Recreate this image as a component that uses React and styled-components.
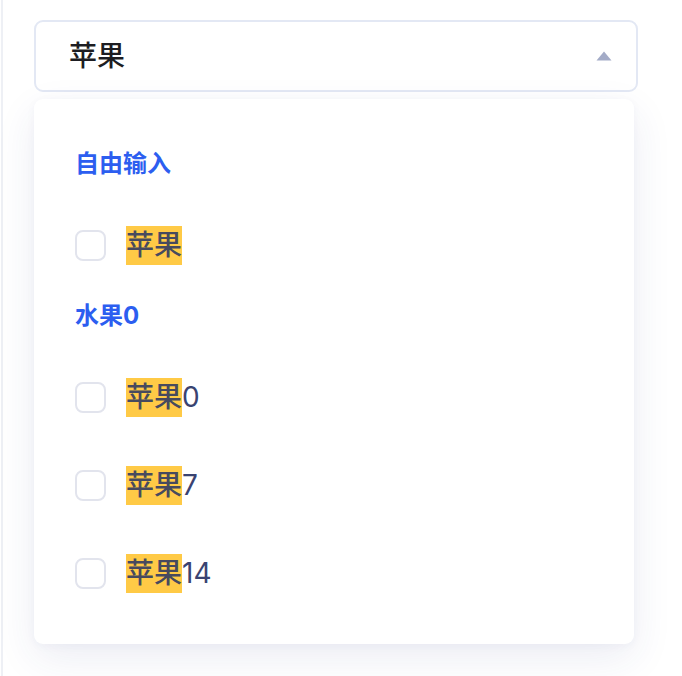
import React from "react";
import styled, { createGlobalStyle } from "styled-components";

const Global = createGlobalStyle`
  html, body { margin: 0; padding: 0; background: #fff; }
  body { font-family: Inter, "Noto Sans CJK SC", sans-serif; }
  * { box-sizing: border-box; }
`;

const Page = styled.div`
  margin-left: 1px;
  border-left: 2px solid #eef0f5;
  min-height: 676px;
  padding: 20px 0 0 31px;
`;

const Select = styled.div`
  width: 604px;
  height: 72px;
  border: 2px solid #e3e8f4;
  border-radius: 9px;
  display: flex;
  align-items: center;
  justify-content: space-between;
  padding: 0 24px 0 33px;
  background: #fff;
`;

const Value = styled.span`
  font-size: 28px;
  line-height: 40px;
  font-weight: 500;
  color: #1d1d22;
`;

const Arrow = styled.svg`
  width: 16px;
  height: 10px;
  display: block;
`;

const Panel = styled.div`
  width: 600px;
  margin-top: 7px;
  background: #fff;
  border-radius: 9px;
  box-shadow: 0 14px 40px rgba(40, 60, 130, 0.09), 0 2px 10px rgba(40, 60, 130, 0.04);
  padding: 38px 41px 27px;
`;

const GroupTitle = styled.div`
  height: 64px;
  padding-top: 10px;
  font-size: 24px;
  line-height: 34px;
  font-weight: 700;
  color: #2c5ef0;
`;

const Item = styled.div`
  height: 88px;
  display: flex;
  align-items: center;
  gap: 20px;
`;

const Check = styled.span`
  width: 31px;
  height: 31px;
  border: 2px solid #e2e4ed;
  border-radius: 8px;
  background: #fff;
  flex: none;
`;

const Label = styled.span`
  font-size: 28px;
  line-height: 39px;
  font-weight: 400;
  color: #3a4371;
  display: flex;
`;

const Mark = styled.mark`
  background: #ffca46;
  color: #474a5e;
  font-weight: 500;
  padding: 0;
`;

const groups = [
  { title: "自由输入", items: [""] },
  { title: "水果0", items: ["0", "7", "14"] },
];

export default function App() {
  return (
    <>
      <Global />
      <Page>
        <Select>
          <Value>苹果</Value>
          <Arrow viewBox="0 0 16 10">
            <path d="M8 0.5 L15.5 9.5 L0.5 9.5 Z" fill="#a3abc7" />
          </Arrow>
        </Select>
        <Panel>
          {groups.map((g) => (
            <div key={g.title}>
              <GroupTitle>{g.title}</GroupTitle>
              {g.items.map((s) => (
                <Item key={s}>
                  <Check />
                  <Label>
                    <Mark>苹果</Mark>
                    {s}
                  </Label>
                </Item>
              ))}
            </div>
          ))}
        </Panel>
      </Page>
    </>
  );
}
